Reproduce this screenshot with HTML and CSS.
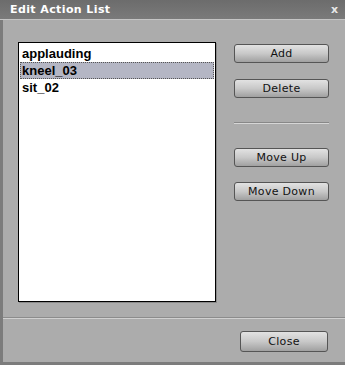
FILE: index.html
```html
<!DOCTYPE html>
<html lang="en">
<head>
	<meta charset="utf-8" />
	<title>Edit Action List</title>
	<link rel="stylesheet" href="styles.css">
</head>
<body>
	<div class="window">
		<div class="titlebar">
			<span class="title">Edit Action List</span>
			<span class="close-x">x</span>
		</div>
		<div class="content">
			<ul class="listbox">
				<li>applauding</li>
				<li class="selected">kneel_03</li>
				<li>sit_02</li>
			</ul>
			<div class="actions">
				<button class="btn">Add</button>
				<button class="btn btn-delete">Delete</button>
				<hr class="sep" />
				<button class="btn btn-up">Move Up</button>
				<button class="btn btn-down">Move Down</button>
			</div>
		</div>
		<div class="footer">
			<button class="btn btn-close">Close</button>
		</div>
	</div>
</body>
</html>
```

FILE: styles.css
```css
html, body {
	margin:0;
	padding:0;
	background:#acacac;
}
/*-------------------*/
.window {
	width:345px;
	height:365px;
	box-sizing:border-box;
	display:flex;
	flex-direction:column;
	background:#acacac;
	border-left:3px solid #7c7c7c;
	border-bottom:3px solid #7c7c7c;
	font-family:"DejaVu Sans", sans-serif;
}
.titlebar {
	height:19px;
	margin-left:-3px;
	display:flex;
	align-items:center;
	justify-content:space-between;
	padding:0 7px 0 10px;
	background:linear-gradient(#6c6c6c, #7a7a7a);
	border-bottom:1px solid #c4c4c4;
	color:#fff;
}
.title {
	font-family:"DejaVu Sans", sans-serif;
	font-weight:bold;
	font-size:11px;
	letter-spacing:0.4px;
}
.close-x {
	font-size:11px;
	font-weight:bold;
	color:#e8e8e8;
}
/*-------------------*/
.content {
	flex:1;
	display:flex;
	padding:22px 0 0 15px;
}
.listbox {
	width:198px;
	height:260px;
	box-sizing:border-box;
	margin:0;
	padding:2px 1px;
	list-style:none;
	background:#fff;
	border:1px solid #000;
	box-shadow:1px 1px 0 #8a8a8a;
	font-family:"Liberation Sans", Arial, sans-serif;
	font-weight:bold;
	font-size:13px;
}
.listbox li {
	height:15px;
	line-height:15px;
	padding-left:1px;
	border:1px dotted transparent;
}
.listbox li.selected {
	background:#b4b6c4;
	border-color:#555;
}
/*-------------------*/
.actions {
	display:flex;
	flex-direction:column;
	margin:2px 0 0 18px;
	width:95px;
}
.btn {
	display:block;
	width:95px;
	height:19px;
	padding:0;
	box-sizing:border-box;
	border:1px solid #555;
	border-radius:3px;
	background:linear-gradient(#e2e2e2, #c8c8c8 50%, #a0a0a0);
	font-family:"DejaVu Sans", sans-serif;
	font-size:11px;
	color:#111;
	letter-spacing:0.3px;
}
.btn-delete {
	margin-top:16px;
}
.sep {
	margin:24px 0 0;
	height:0;
	border:0;
	border-top:1px solid #888;
	border-bottom:1px solid #d6d6d6;
}
.btn-up {
	margin-top:24px;
}
.btn-down {
	margin-top:15px;
}
/*-------------------*/
.footer {
	height:45px;
	box-sizing:border-box;
	border-top:1px solid #8c8c8c;
	box-shadow:inset 0 1px 0 #d0d0d0;
	display:flex;
	justify-content:flex-end;
	padding:13px 17px 0 0;
}
.btn-close {
	width:88px;
	height:21px;
}
```
